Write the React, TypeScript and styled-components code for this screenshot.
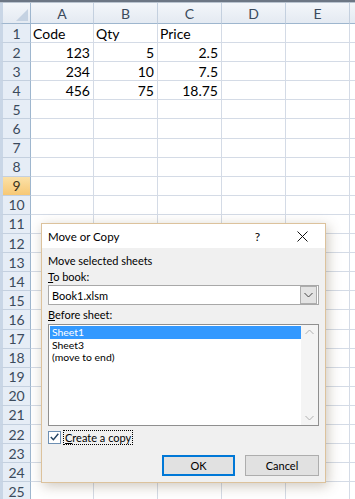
import React from "react";
import styled, { createGlobalStyle, css } from "styled-components";

const GlobalStyle = createGlobalStyle`
  html, body {
    margin: 0;
    padding: 0;
    background: #ffffff;
    overflow: hidden;
  }
`;

const columns = ["A", "B", "C", "D", "E"];

type Row = { code?: string; qty?: string; price?: string; text?: boolean };

const rows: Row[] = [
  { code: "Code", qty: "Qty", price: "Price", text: true },
  { code: "123", qty: "5", price: "2.5" },
  { code: "234", qty: "10", price: "7.5" },
  { code: "456", qty: "75", price: "18.75" },
];

const ROW_COUNT = 25;
const ACTIVE_ROW = 9;

const Sheet = styled.div`
  position: relative;
  width: 355px;
  height: 499px;
  overflow: hidden;
  background: #ffffff;
  font-family: Lato, "Liberation Sans", sans-serif;
`;

const TopBar = styled.div`
  height: 2px;
  background: #6c7684;
  border-bottom: 1px solid #b9c3cf;
`;

const Grid = styled.div`
  display: grid;
  grid-template-columns: 31px 63px 64px 64px 64px 64px 1fr;
  grid-template-rows: 21px;
  grid-auto-rows: 19.1px;
`;

const headerBg = css`
  background: linear-gradient(#f3f6fa, #e4eaf2);
  color: #3b4a5c;
`;

const Corner = styled.div`
  ${headerBg};
  position: relative;
  border-right: 1px solid #9eb6ce;
  border-bottom: 1px solid #9eb6ce;
  border-left: 3px solid #c9d6e6;
  &::after {
    content: "";
    position: absolute;
    right: 2px;
    bottom: 2px;
    border-style: solid;
    border-width: 0 0 12px 12px;
    border-color: transparent transparent #c5d2e2 transparent;
  }
`;

const ColHeader = styled.div`
  ${headerBg};
  display: flex;
  align-items: center;
  justify-content: center;
  font-size: 14px;
  border-right: 1px solid #c4d0df;
  border-bottom: 1px solid #9eb6ce;
`;

const RowHeader = styled.div<{ $active?: boolean }>`
  display: flex;
  align-items: center;
  justify-content: center;
  font-size: 14px;
  border-left: 3px solid #c9d6e6;
  border-right: 1px solid #9eb6ce;
  border-bottom: 1px solid #c4d0df;
  background: ${(p) =>
    p.$active ? "linear-gradient(#fbe1a8, #f7c875)" : "#e6edf6"};
  color: ${(p) => (p.$active ? "#3a3320" : "#3b4a5c")};
`;

const Cell = styled.div<{ $right?: boolean }>`
  display: flex;
  align-items: center;
  justify-content: ${(p) => (p.$right ? "flex-end" : "flex-start")};
  padding: 0 3px 0 2px;
  font-size: 14px;
  color: #000;
  border-right: 1px solid #d4dbe6;
  border-bottom: 1px solid #d4dbe6;
  white-space: nowrap;
  overflow: hidden;
`;

/* dialog */

const Dialog = styled.div`
  position: absolute;
  left: 41px;
  top: 223px;
  width: 283px;
  border: 1px solid #dcc29c;
  background: #f0f0f0;
  box-shadow: 2px 3px 12px rgba(90, 70, 40, 0.3);
  font-family: Lato, "Liberation Sans", sans-serif;
  font-size: 11px;
  color: #000;
`;

const TitleBar = styled.div`
  height: 24px;
  background: #ffffff;
  display: flex;
  align-items: center;
  padding-left: 6px;
  font-size: 11.5px;
`;

const Title = styled.span`
  flex: 1;
`;

const TitleButton = styled.span`
  width: 45px;
  display: flex;
  justify-content: center;
  align-items: center;
  font-size: 12px;
`;

const Body = styled.div`
  padding: 5px 6px 6px 6px;
`;

const Label = styled.div<{ $gap?: number }>`
  line-height: 16px;
  margin-top: ${(p) => p.$gap ?? 0}px;
  u {
    text-decoration: underline;
  }
`;

const Combo = styled.div`
  height: 18px;
  border: 1px solid #a8a8a8;
  background: #fff;
  display: flex;
  align-items: center;
`;

const ComboText = styled.span`
  flex: 1;
  padding-left: 3px;
`;

const DropButton = styled.span`
  width: 15px;
  height: 16px;
  margin-right: 1px;
  border: 1px solid #adadad;
  background: #e3e3e3;
  display: flex;
  align-items: center;
  justify-content: center;
`;

const ListBox = styled.div`
  margin-top: 1px;
  height: 100px;
  border: 1px solid #8f8f8f;
  background: #fff;
  display: flex;
`;

const ListItems = styled.div`
  flex: 1;
  padding: 1px 0 0 1px;
`;

const ListItem = styled.div<{ $selected?: boolean }>`
  height: 12.5px;
  line-height: 12.5px;
  font-size: 10.4px;
  padding-left: 2px;
  background: ${(p) => (p.$selected ? "#3399ff" : "transparent")};
  color: ${(p) => (p.$selected ? "#ffffff" : "#000000")};
`;

const ScrollBar = styled.div`
  width: 17px;
  background: #f4f4f4;
  display: flex;
  flex-direction: column;
  justify-content: space-between;
  align-items: center;
  padding: 4px 0;
`;

const CheckRow = styled.div`
  margin-top: 4px;
  height: 14px;
  display: flex;
  align-items: center;
  gap: 2px;
`;

const CheckBox = styled.span`
  width: 11px;
  height: 11px;
  border: 1px solid #6d8fb3;
  background: #ffffff;
  display: flex;
  align-items: center;
  justify-content: center;
`;

const FocusLabel = styled.span`
  border: 1px dotted #000;
  padding: 0 1px;
  line-height: 13px;
`;

const Buttons = styled.div`
  margin-top: 11px;
  display: flex;
  justify-content: flex-end;
  gap: 10px;
`;

const Button = styled.div<{ $default?: boolean }>`
  width: ${(p) => (p.$default ? 69 : 72)}px;
  height: ${(p) => (p.$default ? 17 : 19)}px;
  border: ${(p) => (p.$default ? "2px solid #0078d7" : "1px solid #adadad")};
  background: #e1e1e1;
  display: flex;
  align-items: center;
  justify-content: center;
`;

const Chevron = ({ up, color = "#555" }: { up?: boolean; color?: string }) => (
  <svg width="9" height="6" viewBox="0 0 9 6">
    <path
      d={up ? "M0.5 5 L4.5 1 L8.5 5" : "M0.5 1 L4.5 5 L8.5 1"}
      fill="none"
      stroke={color}
      strokeWidth="1"
    />
  </svg>
);

const CloseIcon = () => (
  <svg width="11" height="11" viewBox="0 0 11 11">
    <path d="M0.5 0.5 L10.5 10.5 M10.5 0.5 L0.5 10.5" stroke="#111" strokeWidth="1" />
  </svg>
);

const CheckMark = () => (
  <svg width="9" height="8" viewBox="0 0 9 8">
    <path d="M0.8 4 L3.4 6.8 L8.3 0.8" fill="none" stroke="#22405f" strokeWidth="1.4" />
  </svg>
);

const App: React.FC = () => {
  const bodyRows = Array.from({ length: ROW_COUNT }, (_, i) => i + 1);

  return (
    <>
      <GlobalStyle />
      <Sheet>
        <TopBar />
        <Grid>
          <Corner />
          {columns.map((c) => (
            <ColHeader key={c}>{c}</ColHeader>
          ))}
          <ColHeader />
          {bodyRows.map((n) => {
            const data = rows[n - 1];
            return (
              <React.Fragment key={n}>
                <RowHeader $active={n === ACTIVE_ROW}>{n}</RowHeader>
                <Cell $right={data && !data.text}>{data?.code}</Cell>
                <Cell $right={data && !data.text}>{data?.qty}</Cell>
                <Cell $right={data && !data.text}>{data?.price}</Cell>
                <Cell />
                <Cell />
                <Cell />
              </React.Fragment>
            );
          })}
        </Grid>

        <Dialog>
          <TitleBar>
            <Title>Move or Copy</Title>
            <TitleButton>?</TitleButton>
            <TitleButton>
              <CloseIcon />
            </TitleButton>
          </TitleBar>
          <Body>
            <Label>Move selected sheets</Label>
            <Label>
              <u>T</u>o book:
            </Label>
            <Combo>
              <ComboText>Book1.xlsm</ComboText>
              <DropButton>
                <Chevron color="#444" />
              </DropButton>
            </Combo>
            <Label $gap={2}>
              <u>B</u>efore sheet:
            </Label>
            <ListBox>
              <ListItems>
                <ListItem $selected>Sheet1</ListItem>
                <ListItem>Sheet3</ListItem>
                <ListItem>(move to end)</ListItem>
              </ListItems>
              <ScrollBar>
                <Chevron up color="#b0b0b0" />
                <Chevron color="#b0b0b0" />
              </ScrollBar>
            </ListBox>
            <CheckRow>
              <CheckBox>
                <CheckMark />
              </CheckBox>
              <FocusLabel>
                <u>C</u>reate a copy
              </FocusLabel>
            </CheckRow>
            <Buttons>
              <Button $default>OK</Button>
              <Button>Cancel</Button>
            </Buttons>
          </Body>
        </Dialog>
      </Sheet>
    </>
  );
};

export default App;
